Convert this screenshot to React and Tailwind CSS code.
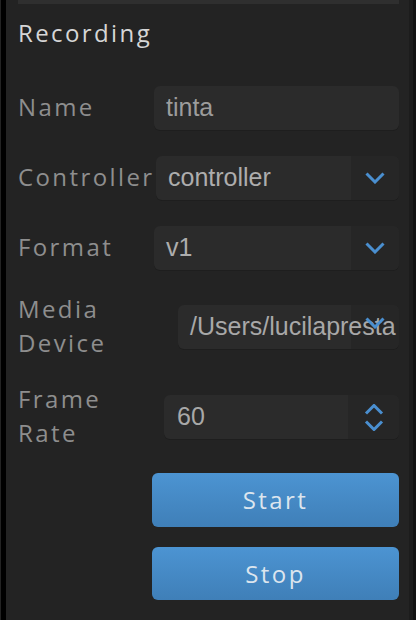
import React from "react";

const labelCls = "text-[24px] tracking-[2.4px] text-[#8e8e8e] leading-[34px] shrink-0 -mt-[2px]";

function Chevron() {
  return (
    <svg width="20" height="12" viewBox="0 0 20 12">
      <path d="M1.5 1.5 L10 10 L18.5 1.5" fill="none" stroke="#4a8fd0" strokeWidth="3" />
    </svg>
  );
}

function Box({ children, className = "" }) {
  return (
    <div className={"relative h-[44px] flex-1 rounded-[6px] bg-[#2b2b2b] shadow-[0_1px_0_#1e1e1e] overflow-hidden flex items-center " + className}>
      {children}
    </div>
  );
}

function Select({ value }) {
  return (
    <Box>
      <div className="absolute right-0 top-0 bottom-0 w-[48px] bg-[#262626]" />
      <span className="relative pl-[12px] text-[25px] text-[#adadad] whitespace-nowrap font-['Liberation_Sans',Arial,sans-serif]">{value}</span>
      <div className="absolute right-0 top-0 bottom-0 w-[48px] flex items-center justify-center">
        <Chevron />
      </div>
    </Box>
  );
}

export default function App() {
  return (
    <div className="w-[416px] h-[620px] flex bg-[#232323] font-['Open_Sans',sans-serif] overflow-hidden">
      <div className="w-[1px] bg-[#232323]" />
      <div className="w-[5px] bg-black" />
      <div className="flex-1 flex flex-col pl-[12px] pr-[10px]">
        <div className="h-[4px] bg-[#2f2f2f]" />
        <div className="mt-[13px] h-[32px] leading-[32px] text-[24px] tracking-[2.4px] text-[#d6d6d6]">Recording</div>

        <div className="mt-[37px] flex items-center">
          <div className={labelCls + " w-[136px]"}>Name</div>
          <Box>
            <span className="pl-[12px] text-[25px] text-[#9c9c9c] font-['Liberation_Sans',Arial,sans-serif]">tinta</span>
          </Box>
        </div>

        <div className="mt-[26px] flex items-center">
          <div className={labelCls + " w-[138px]"}>Controller</div>
          <Select value="controller" />
        </div>

        <div className="mt-[26px] flex items-center">
          <div className={labelCls + " w-[136px]"}>Format</div>
          <Select value="v1" />
        </div>

        <div className="mt-[23px] flex items-center h-[68px]">
          <div className={labelCls + " w-[160px]"}>Media<br />Device</div>
          <Box>
            <div className="absolute right-0 top-0 bottom-0 w-[48px] bg-[#262626]" />
            <span className="relative pl-[12px] text-[25px] text-[#a8a8a8] whitespace-nowrap font-['Liberation_Sans',Arial,sans-serif]">/Users/lucilapresta</span>
            <div className="absolute right-0 top-0 bottom-0 w-[48px] flex items-center justify-center pb-[8px]">
              <Chevron />
            </div>
          </Box>
        </div>

        <div className="mt-[22px] flex items-center h-[68px]">
          <div className={labelCls + " w-[146px]"}>Frame<br />Rate</div>
          <Box>
            <span className="pl-[13px] text-[25px] text-[#a8a8a8] font-['Liberation_Sans',Arial,sans-serif]">60</span>
            <div className="absolute right-0 top-0 bottom-0 w-[51px] bg-[#262626] flex flex-col items-center justify-center gap-[5px]">
              <svg width="20" height="11" viewBox="0 0 20 11">
                <path d="M2 9.5 L10 1.5 L18 9.5" fill="none" stroke="#4a8fd0" strokeWidth="3" />
              </svg>
              <svg width="20" height="11" viewBox="0 0 20 11">
                <path d="M2 1.5 L10 9.5 L18 1.5" fill="none" stroke="#4a8fd0" strokeWidth="3" />
              </svg>
            </div>
          </Box>
        </div>

        <button className="mt-[22px] ml-[134px] h-[54px] rounded-[6px] bg-gradient-to-b from-[#4c94d2] to-[#3f7fb8] text-[24px] tracking-[2.4px] text-[#dce5ee]">Start</button>
        <button className="mt-[20px] ml-[134px] h-[53px] rounded-[6px] bg-gradient-to-b from-[#4c94d2] to-[#3f7fb8] text-[24px] tracking-[2.4px] text-[#dce5ee]">Stop</button>
      </div>
      <div className="w-[4px] bg-[#1c1c1c]" />
      <div className="w-[3px] bg-[#121212]" />
    </div>
  );
}
